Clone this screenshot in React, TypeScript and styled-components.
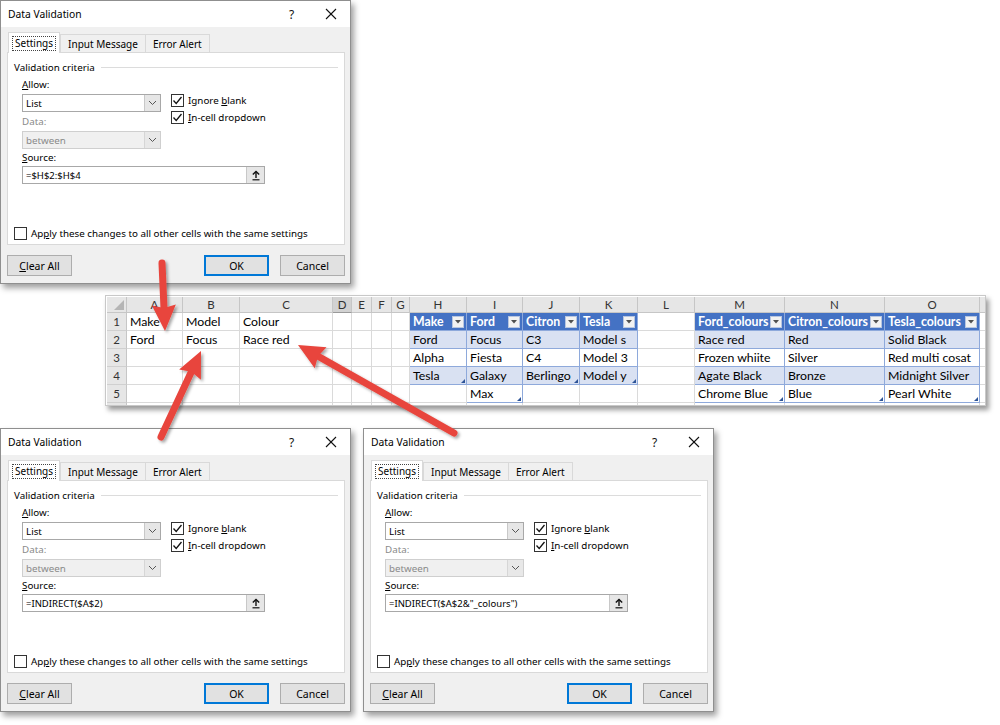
import React from 'react';
import styled, { createGlobalStyle, css } from 'styled-components';

const Global = createGlobalStyle`
  html, body { margin: 0; padding: 0; background: #fff; }
  body { font-family: "Noto Sans", "DejaVu Sans", sans-serif; }
  * { box-sizing: border-box; }
`;

const Canvas = styled.div`
  position: relative;
  width: 1000px;
  height: 725px;
  overflow: hidden;
  background: #fff;
`;

/* ---------------- Dialog ---------------- */

const Window = styled.div<{ $x: number; $y: number }>`
  position: absolute;
  left: ${p => p.$x}px;
  top: ${p => p.$y}px;
  width: 351px;
  height: 284px;
  border: 1px solid #8f8f8f;
  background: #f0f0f0;
  box-shadow: 3px 4px 6px rgba(0, 0, 0, 0.38);
  display: flex;
  flex-direction: column;
  font-family: "Noto Sans", "DejaVu Sans", sans-serif;
  font-size: 9.8px;
  color: #000;
`;

const TitleBar = styled.div`
  height: 26px;
  background: #fff;
  display: flex;
  align-items: center;
  padding-left: 7px;
`;

const TitleText = styled.span`
  font-size: 10.3px;
  color: #000;
`;

const TitleButtons = styled.div`
  margin-left: auto;
  display: flex;
  height: 100%;
`;

const TitleButton = styled.div`
  width: 39px;
  height: 100%;
  display: flex;
  align-items: center;
  justify-content: center;
  font-size: 12px;
  color: #111;
`;

const Body = styled.div`
  flex: 1;
  display: flex;
  flex-direction: column;
  padding: 5px 5px 0 6px;
`;

const TabRow = styled.div`
  display: flex;
  align-items: flex-end;
  height: 20px;
  padding-left: 1px;
  position: relative;
  z-index: 1;
`;

const Tab = styled.div<{ $active?: boolean }>`
  height: 18px;
  padding: 0 7px;
  display: flex;
  align-items: center;
  border: 1px solid #d9d9d9;
  border-bottom: none;
  background: #f0f0f0;
  margin-left: -1px;
  font-size: 10px;
  ${p =>
    p.$active &&
    css`
      height: 21px;
      margin-bottom: -1px;
      background: #fff;
      padding: 0 3px;
      margin-left: 0;
      margin-right: 1px;
    `}
`;

const FocusText = styled.span`
  border: 1px dotted #444;
  padding: 0 2px;
  line-height: 13px;
`;

const Panel = styled.div`
  height: 193px;
  background: #fff;
  border: 1px solid #d9d9d9;
  display: flex;
  flex-direction: column;
  padding: 7px 6px 4px 6px;
`;

const GroupHeader = styled.div`
  display: flex;
  align-items: center;
  height: 14px;
  gap: 6px;
`;

const GroupRule = styled.div`
  flex: 1;
  height: 1px;
  background: #dcdcdc;
`;

const Criteria = styled.div`
  display: grid;
  grid-template-columns: 139px 1fr;
  column-gap: 10px;
  align-items: start;
  padding-left: 8px;
`;

const FieldLabel = styled.div<{ $disabled?: boolean; $mt: number }>`
  grid-column: 1;
  height: 14px;
  line-height: 14px;
  margin-top: ${p => p.$mt}px;
  color: ${p => (p.$disabled ? '#8a8a8a' : '#000')};
`;

const Select = styled.div<{ $disabled?: boolean; $mt: number }>`
  grid-column: 1;
  width: 139px;
  height: 18px;
  margin-top: ${p => p.$mt}px;
  border: 1px solid ${p => (p.$disabled ? '#cfcfcf' : '#a8a8a8')};
  background: ${p => (p.$disabled ? '#f0f0f0' : '#fff')};
  color: ${p => (p.$disabled ? '#8a8a8a' : '#000')};
  display: flex;
  align-items: center;
  padding-left: 3px;
`;

const SelectValue = styled.span`
  flex: 1;
`;

const DropButton = styled.div<{ $disabled?: boolean }>`
  width: 16px;
  height: 100%;
  border-left: 1px solid ${p => (p.$disabled ? '#d6d6d6' : '#c8c8c8')};
  background: ${p => (p.$disabled ? '#e8e8e8' : '#e6e6e6')};
  display: flex;
  align-items: center;
  justify-content: center;
`;

const Checks = styled.div`
  grid-column: 2;
  grid-row: 2 / span 3;
  margin-top: 2px;
  display: flex;
  flex-direction: column;
  gap: 4px;
`;

const CheckRow = styled.div`
  display: flex;
  align-items: center;
  gap: 4px;
  height: 13px;
`;

const Box = styled.div`
  width: 13px;
  height: 13px;
  border: 1px solid #333;
  background: #fff;
  display: flex;
  align-items: center;
  justify-content: center;
`;

const SourceBox = styled.div`
  grid-column: 1 / span 2;
  width: 243px;
  height: 18px;
  margin-top: 1px;
  border: 1px solid #a8a8a8;
  background: #fff;
  display: flex;
  align-items: center;
  padding-left: 3px;
`;

const SourceValue = styled.span`
  flex: 1;
  font-size: 9.5px;
  white-space: nowrap;
`;

const RefButton = styled.div`
  width: 18px;
  height: 16px;
  border-left: 1px solid #c8c8c8;
  background: #e6e6e6;
  display: flex;
  align-items: center;
  justify-content: center;
`;

const ApplyRow = styled.div`
  margin-top: auto;
  display: flex;
  align-items: center;
  gap: 4px;
`;

const Footer = styled.div`
  display: flex;
  align-items: center;
  margin-top: 10px;
  gap: 11px;
`;

const Button = styled.div<{ $default?: boolean }>`
  width: 65px;
  height: 21px;
  display: flex;
  align-items: center;
  justify-content: center;
  background: #e1e1e1;
  border: 1px solid #adadad;
  font-size: 10.5px;
  ${p =>
    p.$default &&
    css`
      border: 2px solid #0078d7;
    `}
`;

const FooterGap = styled.div`
  flex: 1;
`;

const Chevron = () => (
  <svg width="9" height="6" viewBox="0 0 9 6">
    <polyline points="1,1 4.5,4.5 8,1" fill="none" stroke="#555" strokeWidth="1" />
  </svg>
);

const Tick = () => (
  <svg width="11" height="11" viewBox="0 0 11 11">
    <polyline points="1.5,5.5 4.2,8.5 9.5,2" fill="none" stroke="#111" strokeWidth="1.3" />
  </svg>
);

const CloseIcon = () => (
  <svg width="12" height="12" viewBox="0 0 12 12">
    <line x1="1" y1="1" x2="11" y2="11" stroke="#111" strokeWidth="1.1" />
    <line x1="11" y1="1" x2="1" y2="11" stroke="#111" strokeWidth="1.1" />
  </svg>
);

const RefIcon = () => (
  <svg width="10" height="11" viewBox="0 0 10 11">
    <line x1="5" y1="1.5" x2="5" y2="8" stroke="#111" strokeWidth="1.4" />
    <polyline points="1.8,4.6 5,1.4 8.2,4.6" fill="none" stroke="#111" strokeWidth="1.4" />
    <line x1="1.5" y1="9.8" x2="8.5" y2="9.8" stroke="#111" strokeWidth="1.2" />
  </svg>
);

const DataValidationDialog: React.FC<{ x: number; y: number; source: string }> = ({ x, y, source }) => (
  <Window $x={x} $y={y}>
    <TitleBar>
      <TitleText>Data Validation</TitleText>
      <TitleButtons>
        <TitleButton>?</TitleButton>
        <TitleButton>
          <CloseIcon />
        </TitleButton>
      </TitleButtons>
    </TitleBar>
    <Body>
      <TabRow>
        <Tab $active>
          <FocusText>Settings</FocusText>
        </Tab>
        <Tab>Input Message</Tab>
        <Tab>Error Alert</Tab>
      </TabRow>
      <Panel>
        <GroupHeader>
          <span>Validation criteria</span>
          <GroupRule />
        </GroupHeader>
        <Criteria>
          <FieldLabel $mt={4}>
            <u>A</u>llow:
          </FieldLabel>
          <Select $mt={2}>
            <SelectValue>List</SelectValue>
            <DropButton>
              <Chevron />
            </DropButton>
          </Select>
          <Checks>
            <CheckRow>
              <Box>
                <Tick />
              </Box>
              <span>
                Ignore <u>b</u>lank
              </span>
            </CheckRow>
            <CheckRow>
              <Box>
                <Tick />
              </Box>
              <span>
                <u>I</u>n-cell dropdown
              </span>
            </CheckRow>
          </Checks>
          <FieldLabel $disabled $mt={3}>
            Data:
          </FieldLabel>
          <Select $disabled $mt={2}>
            <SelectValue>between</SelectValue>
            <DropButton $disabled>
              <Chevron />
            </DropButton>
          </Select>
          <FieldLabel $mt={2}>
            <u>S</u>ource:
          </FieldLabel>
          <SourceBox>
            <SourceValue>{source}</SourceValue>
            <RefButton>
              <RefIcon />
            </RefButton>
          </SourceBox>
        </Criteria>
        <ApplyRow>
          <Box />
          <span>
            Ap<u>p</u>ly these changes to all other cells with the same settings
          </span>
        </ApplyRow>
      </Panel>
      <Footer>
        <Button>
          <span>
            <u>C</u>lear All
          </span>
        </Button>
        <FooterGap />
        <Button $default>OK</Button>
        <Button>Cancel</Button>
      </Footer>
    </Body>
  </Window>
);

/* ---------------- Spreadsheet ---------------- */

const Sheet = styled.div`
  position: absolute;
  left: 105px;
  top: 295px;
  width: 881px;
  height: 111px;
  background: #fff;
  border: 1px solid #c8c8c8;
  box-shadow: 3px 4px 5px rgba(0, 0, 0, 0.4);
  padding: 1px 0 0 1px;
  overflow: hidden;
`;

const COLS = [20, 56, 57, 93, 19, 20, 20, 18, 57, 56, 57, 58, 57, 90, 100, 95, 10];
const LETTERS = ['', 'A', 'B', 'C', 'D', 'E', 'F', 'G', 'H', 'I', 'J', 'K', 'L', 'M', 'N', 'O', ''];

const Grid = styled.div`
  display: grid;
  grid-template-columns: ${COLS.map(c => `${c}px`).join(' ')};
  grid-template-rows: 16px repeat(5, 18px) 8px;
  font-family: Lato, "Liberation Sans", sans-serif;
  font-size: 12.3px;
  color: #000;
`;

const Corner = styled.div`
  background: #e6e6e6;
  border-right: 1px solid #c6c6c6;
  border-bottom: 1px solid #c6c6c6;
  display: flex;
  align-items: flex-end;
  justify-content: flex-end;
  padding: 0 2px 2px 0;
`;

const ColHead = styled.div<{ $sel?: boolean }>`
  background: ${p => (p.$sel ? '#d2d2d2' : '#e6e6e6')};
  border-right: 1px solid #c6c6c6;
  border-bottom: 1px solid ${p => (p.$sel ? '#9a9a9a' : '#c6c6c6')};
  display: flex;
  align-items: center;
  justify-content: center;
  color: #333;
  font-size: 11.5px;
`;

const RowHead = styled.div`
  background: #e6e6e6;
  border-right: 1px solid #c6c6c6;
  border-bottom: 1px solid #d0d0d0;
  display: flex;
  align-items: center;
  justify-content: center;
  color: #333;
  font-size: 11.5px;
`;

type Kind = 'plain' | 'th' | 'band' | 'body';

const Cell = styled.div<{ $kind: Kind }>`
  position: relative;
  display: flex;
  align-items: center;
  justify-content: space-between;
  padding: 0 2px 0 3px;
  white-space: nowrap;
  border-right: 1px solid #dadada;
  border-bottom: 1px solid #dadada;
  background: #fff;
  ${p =>
    p.$kind === 'th' &&
    css`
      background: #4472c4;
      color: #fff;
      font-weight: 700;
      border-right: 1px solid #8ea9db;
      border-bottom: 1px solid #8ea9db;
    `}
  ${p =>
    (p.$kind === 'band' || p.$kind === 'body') &&
    css`
      background: ${p.$kind === 'band' ? '#d9e1f2' : '#fff'};
      border-right: 1px solid #8ea9db;
      border-bottom: 1px solid #8ea9db;
    `}
`;

const FilterButton = styled.div`
  width: 12px;
  height: 12px;
  flex-shrink: 0;
  background: #f2f2f2;
  border: 1px solid #b8c6e0;
  display: flex;
  align-items: center;
  justify-content: center;
`;

const ResizeHandle = styled.div`
  position: absolute;
  right: 1px;
  bottom: 1px;
  width: 0;
  height: 0;
  border-left: 4px solid transparent;
  border-bottom: 4px solid #2f5597;
`;

type Table = { col: number; header: string; rows: string[] };

const TABLES: Table[] = [
  { col: 8, header: 'Make', rows: ['Ford', 'Alpha', 'Tesla'] },
  { col: 9, header: 'Ford', rows: ['Focus', 'Fiesta', 'Galaxy', 'Max'] },
  { col: 10, header: 'Citron', rows: ['C3', 'C4', 'Berlingo'] },
  { col: 11, header: 'Tesla', rows: ['Model s', 'Model 3', 'Model y'] },
  { col: 13, header: 'Ford_colours', rows: ['Race red', 'Frozen whiite', 'Agate Black', 'Chrome Blue'] },
  { col: 14, header: 'Citron_colours', rows: ['Red', 'Silver', 'Bronze', 'Blue'] },
  { col: 15, header: 'Tesla_colours', rows: ['Solid Black', 'Red multi cosat', 'Midnight Silver', 'Pearl White'] },
];

const PLAIN: Record<string, string> = {
  '1-1': 'Make',
  '1-2': 'Model',
  '1-3': 'Colour',
  '2-1': 'Ford',
  '2-2': 'Focus',
  '2-3': 'Race red',
};

const CornerTriangle = () => (
  <svg width="10" height="10" viewBox="0 0 10 10">
    <polygon points="10,0 10,10 0,10" fill="#b5b5b5" />
  </svg>
);

const FilterArrow = () => (
  <svg width="6" height="4" viewBox="0 0 6 4">
    <polygon points="0,0 6,0 3,3.5" fill="#505050" />
  </svg>
);

const Spreadsheet: React.FC = () => {
  const cells: React.ReactNode[] = [];
  cells.push(
    <Corner key="corner">
      <CornerTriangle />
    </Corner>
  );
  for (let c = 1; c < COLS.length; c++) {
    cells.push(
      <ColHead key={`h${c}`} $sel={c === 4}>
        {LETTERS[c]}
      </ColHead>
    );
  }
  for (let r = 1; r <= 6; r++) {
    cells.push(<RowHead key={`r${r}`}>{r <= 5 ? r : ''}</RowHead>);
    for (let c = 1; c < COLS.length; c++) {
      const t = TABLES.find(tb => tb.col === c);
      let kind: Kind = 'plain';
      let text = PLAIN[`${r}-${c}`] ?? '';
      let last = false;
      if (t) {
        const i = r - 2;
        if (r === 1) {
          kind = 'th';
          text = t.header;
        } else if (i < t.rows.length) {
          kind = i % 2 === 0 ? 'band' : 'body';
          text = t.rows[i];
          last = i === t.rows.length - 1;
        }
      }
      cells.push(
        <Cell key={`c${r}-${c}`} $kind={kind}>
          <span>{text}</span>
          {kind === 'th' && (
            <FilterButton>
              <FilterArrow />
            </FilterButton>
          )}
          {last && <ResizeHandle />}
        </Cell>
      );
    }
  }
  return (
    <Sheet>
      <Grid>{cells}</Grid>
    </Sheet>
  );
};

/* ---------------- Arrows ---------------- */

const Overlay = styled.svg`
  position: absolute;
  left: 0;
  top: 0;
  width: 1000px;
  height: 725px;
  pointer-events: none;
  z-index: 10;
`;

type ArrowSpec = { tx: number; ty: number; hx: number; hy: number };

const ARROWS: ArrowSpec[] = [
  { tx: 162, ty: 263, hx: 165, hy: 331 },
  { tx: 161, ty: 437, hx: 201, hy: 351 },
  { tx: 454, ty: 433, hx: 298, hy: 345 },
];

const Arrow: React.FC<ArrowSpec> = ({ tx, ty, hx, hy }) => {
  const dx = hx - tx;
  const dy = hy - ty;
  const len = Math.hypot(dx, dy);
  const ux = dx / len;
  const uy = dy / len;
  const px = -uy;
  const py = ux;
  const hl = 26;
  const hw = 12;
  const bx = hx - ux * hl;
  const by = hy - uy * hl;
  const pts = [
    `${hx},${hy}`,
    `${bx + px * hw},${by + py * hw}`,
    `${bx + ux * 3},${by + uy * 3}`,
    `${bx - px * hw},${by - py * hw}`,
  ].join(' ');
  return (
    <g filter="url(#arrowShadow)">
      <line x1={tx} y1={ty} x2={bx + ux * 4} y2={by + uy * 4} stroke="#e8453c" strokeWidth="7" strokeLinecap="round" />
      <polygon points={pts} fill="#e8453c" />
    </g>
  );
};

export default function App() {
  return (
    <>
      <Global />
      <Canvas>
        <DataValidationDialog x={0} y={0} source="=$H$2:$H$4" />
        <Spreadsheet />
        <DataValidationDialog x={0} y={428} source="=INDIRECT($A$2)" />
        <DataValidationDialog x={363} y={428} source={'=INDIRECT($A$2&"_colours")'} />
        <Overlay viewBox="0 0 1000 725">
          <defs>
            <filter id="arrowShadow" x="-20%" y="-20%" width="140%" height="140%">
              <feDropShadow dx="2" dy="2" stdDeviation="1.5" floodColor="#000" floodOpacity="0.35" />
            </filter>
          </defs>
          {ARROWS.map((a, i) => (
            <Arrow key={i} {...a} />
          ))}
        </Overlay>
      </Canvas>
    </>
  );
}
